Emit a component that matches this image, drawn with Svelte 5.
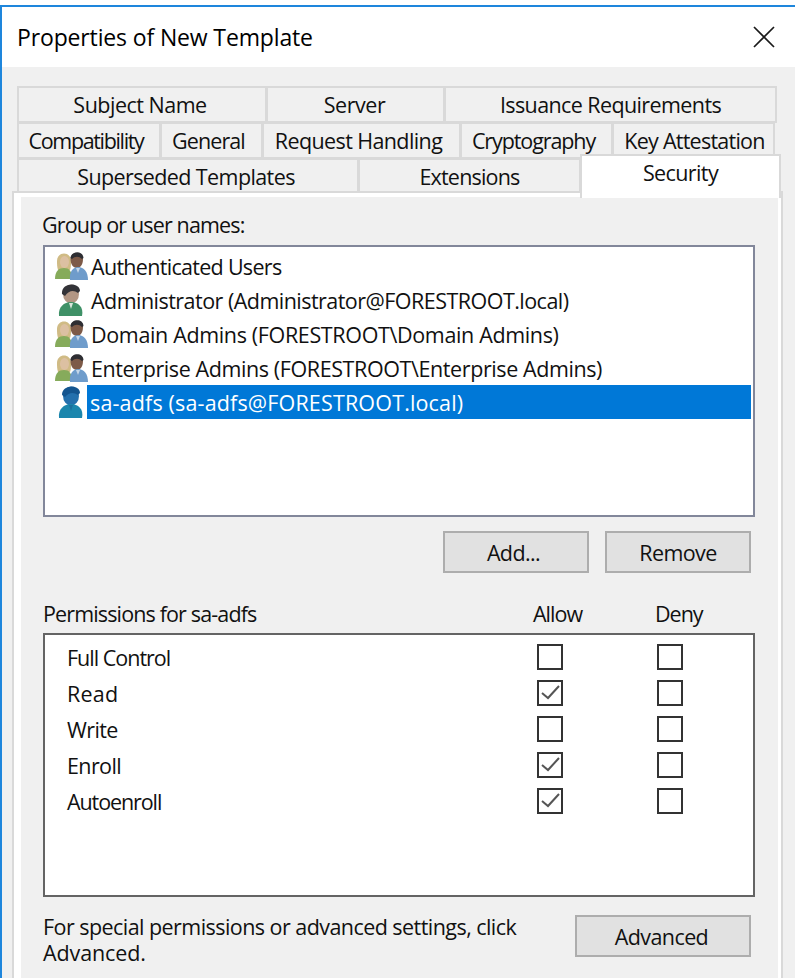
<script>
  const users = [
    { name: "Authenticated Users", icon: "group", spacing: -0.7 },
    { name: "Administrator (Administrator@FORESTROOT.local)", icon: "user", spacing: -0.53 },
    { name: "Domain Admins (FORESTROOT\\Domain Admins)", icon: "group", spacing: -0.35 },
    { name: "Enterprise Admins (FORESTROOT\\Enterprise Admins)", icon: "group", spacing: -0.4 },
    { name: "sa-adfs (sa-adfs@FORESTROOT.local)", icon: "user", selected: true, spacing: 0.16 },
  ];

  const permissions = [
    { name: "Full Control", allow: false, spacing: -1 },
    { name: "Read", allow: true, spacing: 0.2 },
    { name: "Write", allow: false, spacing: -0.6 },
    { name: "Enroll", allow: true, spacing: -0.6 },
    { name: "Autoenroll", allow: true, spacing: -1.1 },
  ];

  // label, width, letter spacing, how far the label sits right of centre
  const tabRows = [
    [["Subject Name", 250, -0.5, -2], ["Server", 179, -0.45, -1], ["Issuance Requirements", 333, -0.6, 0]],
    [["Compatibility", 144, -1.35, -3], ["General", 103, -0.9, -3], ["Request Handling", 199, -0.6, -3], ["Cryptography", 153, -1.1, -3], ["Key Attestation", 163, -0.75, 1]],
    [["Superseded Templates", 342, -0.6, -2], ["Extensions", 223, -0.8, 0]],
  ];
</script>

<div class="window">
  <header class="titlebar">
    <span class="title">Properties of New Template</span>
    <svg class="close" width="22" height="22" viewBox="0 0 22 22">
      <path d="M1 1 L21 21 M21 1 L1 21" stroke="#1a1a1a" stroke-width="1.7" fill="none" />
    </svg>
  </header>

  <div class="body">
    <div class="tabs">
      {#each tabRows as row, i}
        <div class="tab-row">
          {#each row as [label, width, spacing, nudge]}
            <div class="tab" class:last={i === 2} style="width: {width}px; letter-spacing: {spacing}px; text-indent: {nudge * 2}px">{label}</div>
          {/each}
        </div>
      {/each}
      <div class="tab-active">Security</div>
    </div>

    <div class="panel">
      <div class="label group-label">Group or user names:</div>
      <div class="list">
        {#each users as user}
          <div class="list-row">
            <span class="icon">
              {#if user.icon === "group"}
                <svg width="33" height="29" viewBox="0 0 33 29">
                  <path d="M2 9 C2 -1 16 -1 16 9 C16 13 16 16 15 18 L3 18 C2 15 2 12 2 9 Z" fill="#d0bb85" />
                  <ellipse cx="9.5" cy="10" rx="4.5" ry="6" fill="#dcc0a2" />
                  <path d="M0 27 C0 19 4 16 9 16 C14 16 17 19 17 27 Z" fill="#86ab5b" />
                  <path d="M15.5 7 C15.5 -1 28 -1 28 7 C28 13 25 16 22 16 C18 16 15.5 12 15.5 7 Z" fill="#7d5a48" />
                  <path d="M15.5 6 C16 -1 28 -2 28.5 6 L27 7 C24 4 20 4 17 7 Z" fill="#2e2e33" />
                  <path d="M15 28 C14 20 18 15 23 15 C29 15 33 20 33 28 Z" fill="#6f9ccb" />
                  <path d="M21 16 L25 16 L23 21 Z" fill="#c4d6e8" />
                </svg>
              {:else if user.selected}
                <svg width="26" height="33" viewBox="0 0 26 33">
                  <ellipse cx="13" cy="10" rx="8" ry="9.5" fill="#2470ad" />
                  <path d="M4 9 C4 -2 22 -2 22 7 L20 9 C16 6 11 6 7 11 Z" fill="#14558f" />
                  <path d="M1 32 C0 23 6 18 13 18 C20 18 26 23 24 32 Z" fill="#1b86ad" />
                  <path d="M11 19 L15 19 L13 25 Z" fill="#1c6f9c" />
                </svg>
              {:else}
                <svg width="26" height="33" viewBox="0 0 26 33">
                  <ellipse cx="13" cy="10" rx="8" ry="9.5" fill="#b29684" />
                  <path d="M4 10 C3 -2 22 -2 22 7 L20 9 C16 6 11 6 7 12 Z" fill="#333338" />
                  <path d="M1 32 C0 23 6 18 13 18 C20 18 26 23 24 32 Z" fill="#3f9167" />
                  <path d="M11 19 L15 19 L13 25 Z" fill="#d9e6dc" />
                </svg>
              {/if}
            </span>
            <span class="list-text" class:selected={user.selected} style="letter-spacing: {user.spacing}px">{user.name}</span>
          </div>
        {/each}
      </div>

      <div class="list-buttons">
        <button class="btn add">Add...</button>
        <button class="btn">Remove</button>
      </div>

      <div class="perm-head">
        <span class="perm-title">Permissions for sa-adfs</span>
        <span class="col-allow">Allow</span>
        <span class="col-deny">Deny</span>
      </div>

      <div class="perm-box">
        {#each permissions as perm}
          <div class="perm-row">
            <span class="perm-name" style="letter-spacing: {perm.spacing}px">{perm.name}</span>
            <span class="check">
              {#if perm.allow}
                <svg width="22" height="22" viewBox="0 0 22 22">
                  <path d="M3 11 L9 16 L20 4" stroke="#555" stroke-width="2" fill="none" />
                </svg>
              {/if}
            </span>
            <span class="check deny"></span>
          </div>
        {/each}
      </div>

      <div class="footer">
        <div class="hint">
          <div>For special permissions or advanced settings, click</div>
          <div class="hint-word">Advanced.</div>
        </div>
        <button class="btn advanced">Advanced</button>
      </div>
    </div>
  </div>
</div>

<style>
  :global(body) {
    margin: 0;
    background: #fff;
  }

  .window {
    box-sizing: border-box;
    width: 795px;
    margin-top: 5px;
    height: 973px;
    overflow: hidden;
    border-top: 2px solid #1e86dc;
    border-left: 2px solid #1e86dc;
    font-family: "Open Sans", "Noto Sans", sans-serif;
    font-size: 21.5px;
    letter-spacing: -0.6px;
    color: #111;
    background: #f0f0f0;
    display: flex;
    flex-direction: column;
  }

  .titlebar {
    height: 60px;
    flex: none;
    background: #fff;
    display: flex;
    align-items: center;
    justify-content: space-between;
    padding: 0 20px 0 15px;
  }

  .title {
    font-size: 23px;
    letter-spacing: -0.14px;
    color: #000;
  }

  .body {
    flex: 1;
    padding: 19px 0 0 12px;
    display: flex;
    flex-direction: column;
    min-height: 0;
  }

  .tabs {
    position: relative;
    padding-left: 3px;
  }

  .tab-row {
    display: flex;
    height: 36px;
  }

  .tab {
    box-sizing: border-box;
    height: 37px;
    border: 2px solid #d9d9d9;
    margin-right: -1px;
    text-align: center;
    line-height: 33px;
    white-space: nowrap;
    background: #f0f0f0;
    flex: none;
  }

  .tab.last {
    height: 36px;
  }

  .tab-active {
    position: absolute;
    box-sizing: border-box;
    left: 566px;
    top: 68px;
    width: 201px;
    height: 44px;
    background: #fff;
    border: 2px solid #d9d9d9;
    border-bottom: none;
    text-align: center;
    line-height: 33px;
    z-index: 2;
  }

  .panel {
    box-sizing: border-box;
    flex: 1;
    width: 767px;
    margin-top: -1px;
    background: #f0f0f0;
    border: solid #fff;
    border-width: 4px 3px 0 7px;
    outline: 2px solid #d9d9d9;
    padding: 14px 0 0 21px;
    position: relative;
    z-index: 1;
  }

  .group-label {
    height: 34px;
    line-height: 28px;
    letter-spacing: -0.85px;
  }

  .list {
    box-sizing: border-box;
    width: 712px;
    margin-left: 1px;
    height: 272px;
    background: #fff;
    border: 2px solid #82879a;
    padding: 2px;
  }

  .list-row {
    display: flex;
    align-items: center;
    height: 34px;
  }

  .icon {
    flex: none;
    width: 42px;
    margin-left: 3px;
    margin-right: -5px;
    display: flex;
    justify-content: center;
  }

  .list-text {
    flex: 1;
    height: 34px;
    line-height: 36px;
    padding-left: 4px;
    white-space: nowrap;
  }

  .list-text.selected {
    background: #0078d7;
    color: #fff;
    padding-left: 3px;
  }

  .list-buttons {
    display: flex;
    gap: 16px;
    margin-top: 14px;
    margin-left: 401px;
  }

  .btn {
    box-sizing: border-box;
    width: 146px;
    height: 42px;
    background: #e1e1e1;
    border: 2px solid #adadad;
    font: inherit;
    letter-spacing: inherit;
    color: #111;
    padding: 0;
  }

  .btn.add {
    padding-right: 5px;
  }

  .perm-head {
    display: flex;
    margin-top: 25px;
    margin-left: 1px;
    height: 35px;
    line-height: 32px;
  }

  .perm-title {
    width: 490px;
    letter-spacing: -0.86px;
  }

  .col-allow {
    width: 122px;
    letter-spacing: -1px;
  }

  .col-deny {
    letter-spacing: -1px;
  }

  .perm-box {
    box-sizing: border-box;
    width: 712px;
    margin-left: 1px;
    height: 264px;
    background: #fff;
    border: 2px solid #646464;
    padding: 4px 0 0 22px;
  }

  .perm-row {
    display: flex;
    align-items: center;
    height: 36px;
  }

  .perm-name {
    width: 470px;
  }

  .check {
    box-sizing: border-box;
    width: 26px;
    height: 26px;
    border: 2.5px solid #333;
    flex: none;
    display: flex;
    align-items: center;
    justify-content: center;
  }

  .check.deny {
    margin-left: 94px;
  }

  .footer {
    display: flex;
    justify-content: space-between;
    margin-top: 18px;
    margin-left: 1px;
    width: 708px;
  }

  .hint {
    margin-top: -1px;
    line-height: 26px;
    letter-spacing: -0.55px;
  }

  .hint-word {
    letter-spacing: -0.1px;
  }

  .btn.advanced {
    width: 176px;
    padding-right: 3px;
  }
</style>
